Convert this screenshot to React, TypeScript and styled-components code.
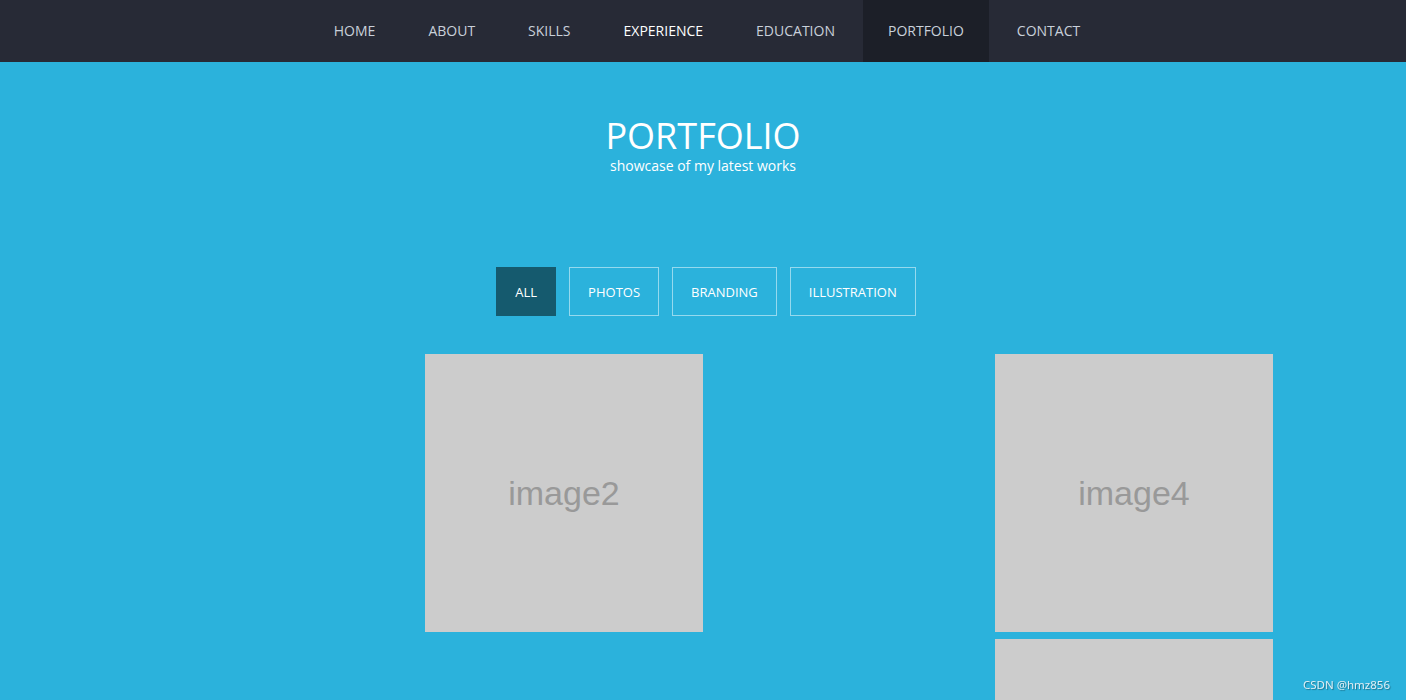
import React, { useState } from "react";
import styled, { createGlobalStyle } from "styled-components";

const navItems = ["HOME", "ABOUT", "SKILLS", "EXPERIENCE", "EDUCATION", "PORTFOLIO", "CONTACT"];
const filters = ["ALL", "PHOTOS", "BRANDING", "ILLUSTRATION"];

const tiles: (string | null)[] = [null, "image2", null, "image4", null, null, null, "image5"];

function App() {
  const [active, setActive] = useState("ALL");

  return (
    <Page>
      <GlobalStyle />
      <Nav>
        <NavList>
          {navItems.map((item) => (
            <NavItem key={item} $active={item === "PORTFOLIO"} $hover={item === "EXPERIENCE"}>
              {item}
            </NavItem>
          ))}
        </NavList>
      </Nav>

      <Section>
        <Heading>
          <Title>PORTFOLIO</Title>
          <Subtitle>showcase of my latest works</Subtitle>
        </Heading>

        <FilterBar>
          {filters.map((f) => (
            <FilterButton key={f} $active={f === active} onClick={() => setActive(f)}>
              {f}
            </FilterButton>
          ))}
        </FilterBar>

        <Grid>
          {tiles.map((t, i) => (
            <Tile key={i} $hidden={!t}>
              {t}
            </Tile>
          ))}
        </Grid>
      </Section>

      <Watermark>CSDN @hmz856</Watermark>
    </Page>
  );
}

const GlobalStyle = createGlobalStyle`
  html, body {
    margin: 0;
    padding: 0;
    height: 100%;
    overflow: hidden;
    background-color: #2bb2dc;
  }
  body {
    font-family: "Open Sans", "Noto Sans", sans-serif;
  }
`;

const Page = styled.div`
  min-height: 700px;
  background-color: #2bb2dc;
`;

const Nav = styled.nav`
  height: 62px;
  background-color: #272a36;
  display: flex;
  justify-content: center;
`;

const NavList = styled.ul`
  display: flex;
  gap: 3px;
  margin: 0;
  padding: 0 0 0 8px;
  list-style: none;
`;

const NavItem = styled.li<{ $active?: boolean; $hover?: boolean }>`
  display: flex;
  align-items: center;
  height: 60px;
  padding: 0 25px 2px;
  font-size: 14px;
  color: ${({ $hover }) => ($hover ? "#ffffff" : "#c9d0da")};
  background-color: ${({ $active }) => ($active ? "#1c1f28" : "transparent")};
  cursor: pointer;
`;

const Section = styled.section`
  padding-top: 54px;
`;

const Heading = styled.div`
  text-align: center;
  color: #ffffff;
`;

const Title = styled.h2`
  margin: 0;
  font-size: 36px;
  font-weight: 400;
  line-height: 40px;
`;

const Subtitle = styled.p`
  margin: 0;
  font-size: 14px;
  line-height: 20px;
`;

const FilterBar = styled.div`
  display: flex;
  justify-content: center;
  gap: 13px;
  margin-top: 91px;
  padding-left: 6px;
`;

const FilterButton = styled.button<{ $active?: boolean }>`
  height: 49px;
  padding: 0 18px;
  font-family: "Open Sans", "Noto Sans", sans-serif;
  font-size: 13px;
  color: #ffffff;
  background-color: ${({ $active }) => ($active ? "#155a6e" : "transparent")};
  border: 1px solid ${({ $active }) => ($active ? "#155a6e" : "rgba(255, 255, 255, 0.5)")};
  cursor: pointer;
`;

const Grid = styled.div`
  display: grid;
  grid-template-columns: repeat(4, 278px);
  grid-auto-rows: 278px;
  gap: 7px;
  width: 1133px;
  margin: 38px 0 0 140px;
`;

const Tile = styled.div<{ $hidden?: boolean }>`
  display: flex;
  align-items: center;
  justify-content: center;
  background-color: #cccccc;
  color: #999999;
  font-family: "Liberation Sans", Arial, sans-serif;
  font-size: 34px;
  visibility: ${({ $hidden }) => ($hidden ? "hidden" : "visible")};
`;

const Watermark = styled.div`
  position: fixed;
  right: 16px;
  bottom: 8px;
  font-family: "Noto Sans", "Open Sans", sans-serif;
  font-size: 11.5px;
  color: #dfeef4;
  text-shadow: 1px 1px 1px rgba(0, 0, 0, 0.35);
`;

export default App;
